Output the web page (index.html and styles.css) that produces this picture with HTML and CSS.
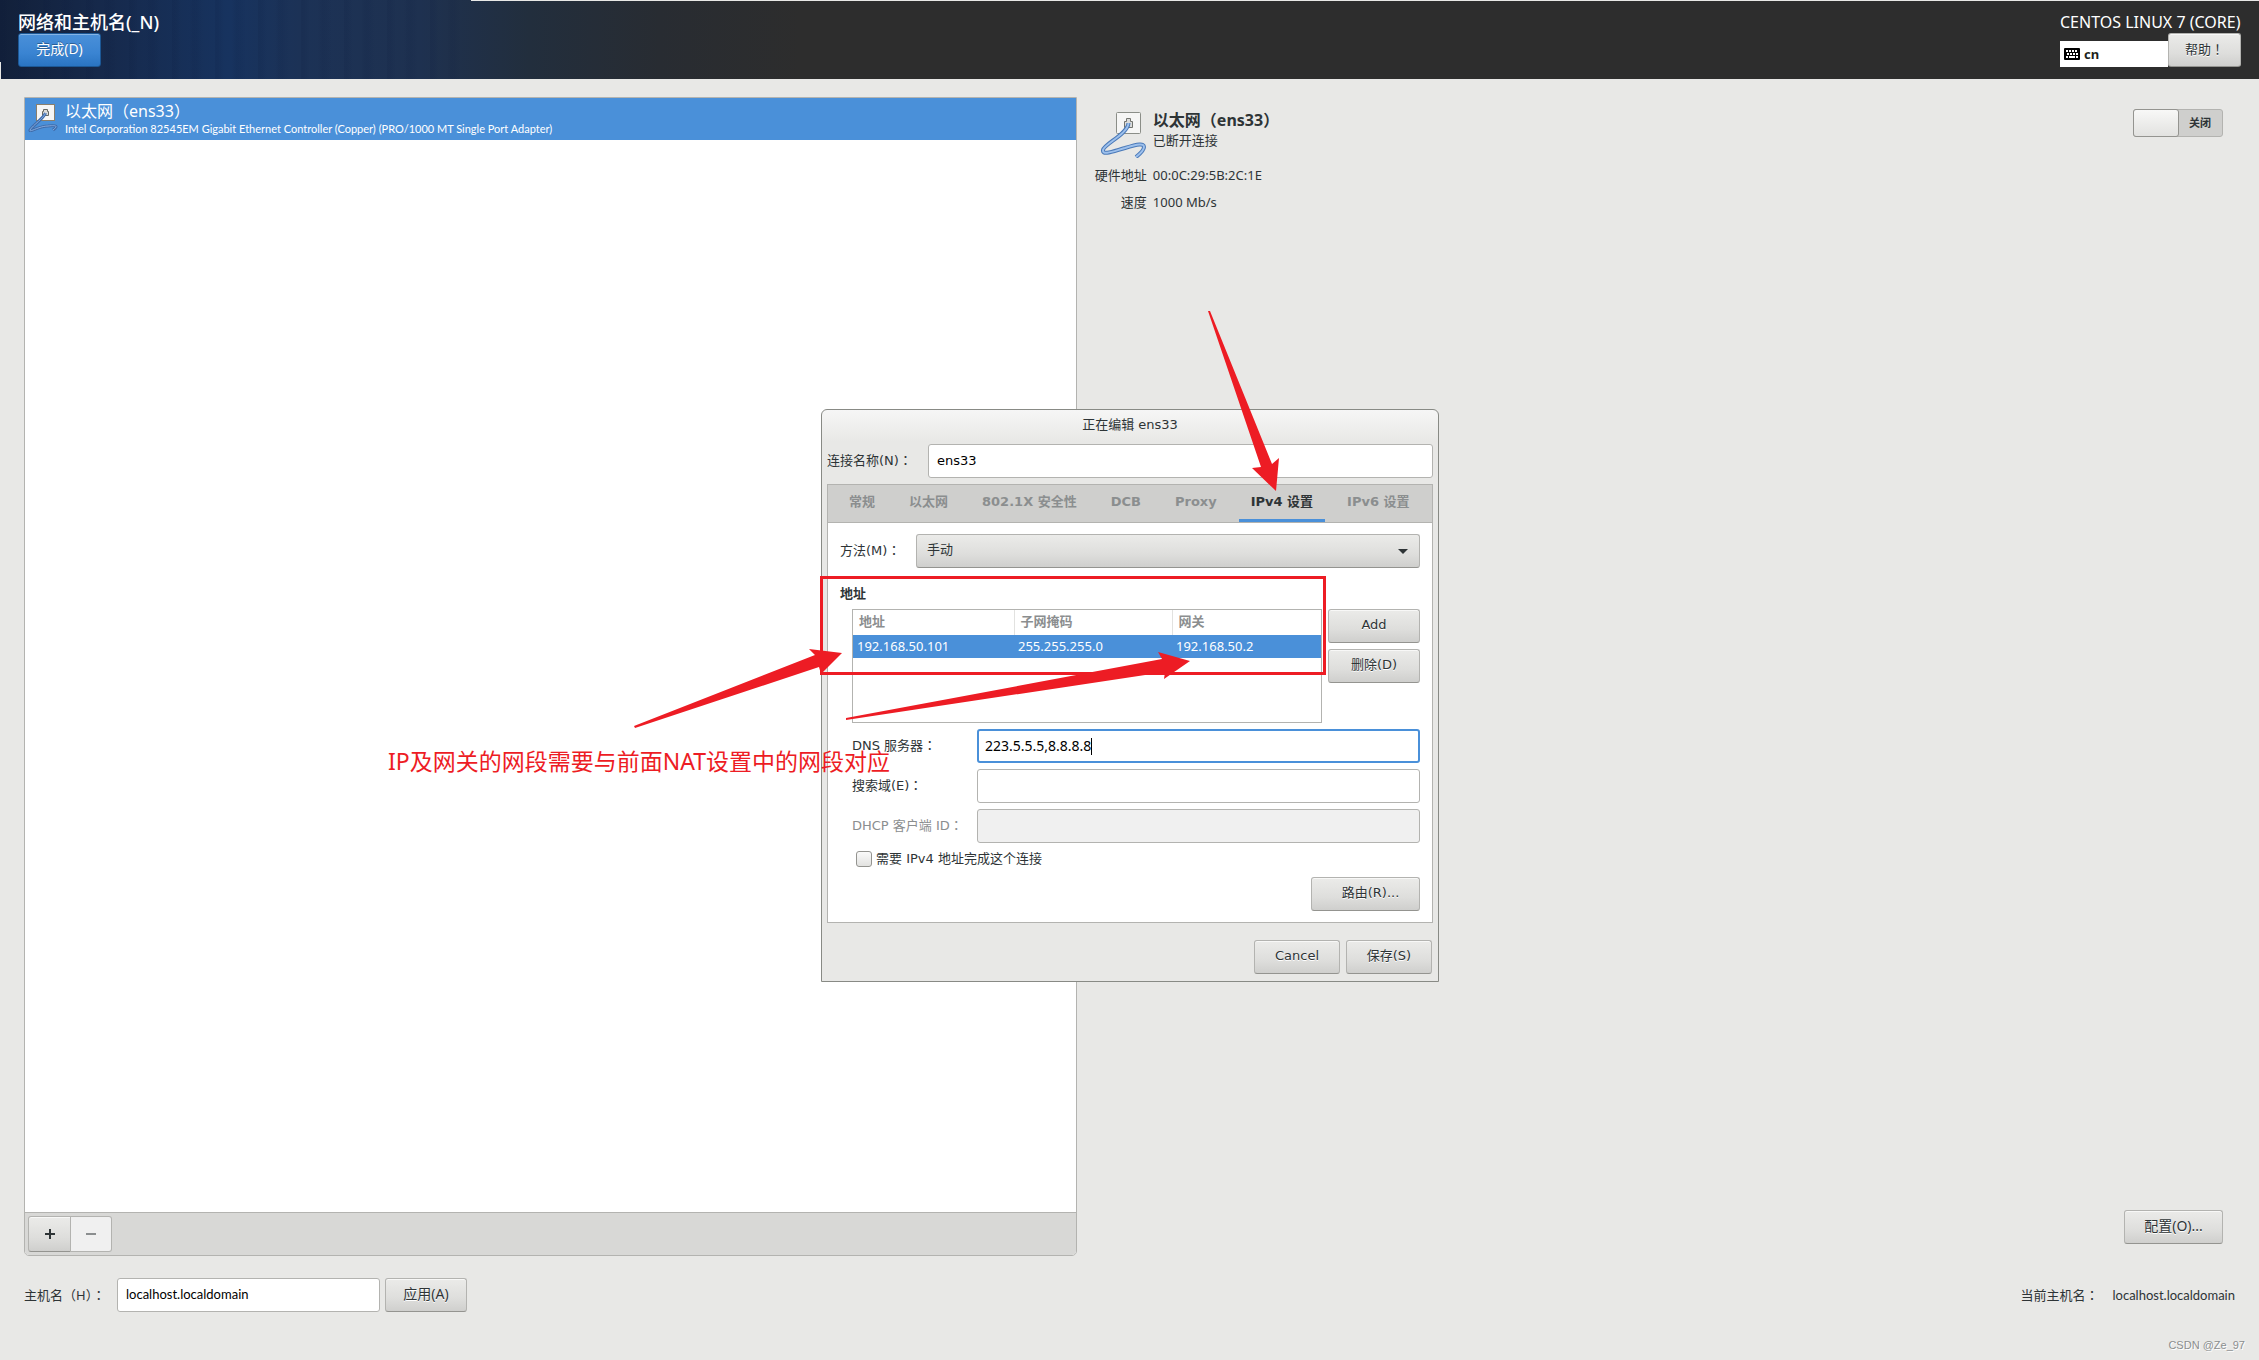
FILE: index.html
```html
<!DOCTYPE html>
<html lang="zh-CN">
<head>
  <meta charset="UTF-8">
  <meta name="viewport" content="width=device-width, initial-scale=1.0">
  <title>网络和主机名</title>
  <link rel="stylesheet" href="styles.css">
</head>
<body>
  <header>
    <div class="head-left">
      <h1>网络和主机名(_N)</h1>
      <button class="btn btn-blue">完成(D)</button>
    </div>
    <div class="head-right">
      <div class="product">CENTOS LINUX 7 (CORE)</div>
      <div class="head-tools">
        <div class="keyboard">
          <svg width="16" height="12" viewBox="0 0 16 12">
            <rect width="16" height="12" rx="1" fill="#000"/>
            <path d="M2 3H14M3 6H14" stroke="#fff" stroke-width="2" stroke-dasharray="2 1"/>
            <path d="M2 9H4M5 9H11M12 9H14" stroke="#fff" stroke-width="2"/>
          </svg>
          <span>cn</span>
        </div>
        <button class="btn btn-help">帮助<span class="mark" lang="zh-TW">！</span></button>
      </div>
    </div>
  </header>

  <main>
    <div class="columns">
      <section class="devices">
        <div class="device selected">
          <svg class="icon-small" viewBox="0 0 30 28">
            <rect x="8.500" y="0.500" width="18" height="16" fill="#f6f6f5" stroke="#8b7f6b"/>
            <path d="M14.500 11.500V7.500H15.500V5.500H19.500V7.500H20.500V11.500Z" fill="#dcdcda" stroke="#666862"/>
            <path d="M17.500 9C16 14 5 21 2 26C1 29 11 22 20 22C29 21 30 22 25 26" fill="none" stroke="#3f6cab" stroke-width="3"/>
            <path d="M17.500 9C16 14 5 21 2 26C1 29 11 22 20 22C29 21 30 22 25 26" fill="none" stroke="#83aade"/>
          </svg>
          <div>
            <div class="device-name">以太网（ens33）</div>
            <div class="device-desc">Intel Corporation 82545EM Gigabit Ethernet Controller (Copper) (PRO/1000 MT Single Port Adapter)</div>
          </div>
        </div>
        <div class="toolbar">
          <button class="btn tool" aria-label="添加"><svg width="10" height="10"><path d="M5 0V10M0 5H10" stroke="#2e3436" stroke-width="2"/></svg></button>
          <button class="btn tool" aria-label="移除" disabled><svg width="10" height="10"><path d="M0 5H10" stroke="#8b8e8f" stroke-width="2"/></svg></button>
        </div>
      </section>

      <section class="details">
        <div class="details-head">
          <svg class="icon-big" viewBox="0 0 47 46">
            <rect x="16.500" y="0.500" width="24" height="21" rx="1" fill="#f6f6f5" stroke="#8b8e88"/>
            <path d="M24.500 15.500V9.500H26.500V6.500H30.500V9.500H32.500V15.500Z" fill="#dcdcda" stroke="#72746f"/>
            <path d="M28.500 11C28 22 4 32 3 38C2 44 14 39 25 36C38 32 44 31 44 35C44 38 41 41 36 45" fill="none" stroke="#4a79b8" stroke-width="4"/>
            <path d="M28.500 11C28 22 4 32 3 38C2 44 14 39 25 36C38 32 44 31 44 35C44 38 41 41 36 45" fill="none" stroke="#9dc0ec" stroke-width="2"/>
          </svg>
          <div>
            <h2>以太网（ens33）</h2>
            <p>已断开连接</p>
          </div>
          <label class="switch"><input type="checkbox" aria-label="以太网"><span class="knob"></span><span class="state">关闭</span></label>
        </div>
        <dl>
          <dt>硬件地址</dt><dd>00:0C:29:5B:2C:1E</dd>
          <dt>速度</dt><dd>1000 Mb/s</dd>
        </dl>
        <button class="btn btn-config">配置(O)...</button>
      </section>
    </div>

    <div class="hostname">
      <label for="host">主机名（H）<span class="mark" lang="zh-TW">：</span></label>
      <input type="text" id="host" value="localhost.localdomain">
      <button class="btn btn-apply">应用(A)</button>
      <span class="current">当前主机名<span class="mark" lang="zh-TW">：</span></span>
      <span class="current-name">localhost.localdomain</span>
    </div>
  </main>

  <div class="dialog-layer">
    <div class="dialog" role="dialog" aria-labelledby="dialog-title">
      <div class="dialog-title" id="dialog-title">正在编辑 ens33</div>
      <div class="name-row">
        <label for="conn">连接名称(N)<span class="mark" lang="zh-TW">：</span></label>
        <input type="text" id="conn" value="ens33">
      </div>

      <div class="notebook">
        <nav class="tabs">
          <button>常规</button>
          <button>以太网</button>
          <button>802.1X 安全性</button>
          <button>DCB</button>
          <button>Proxy</button>
          <button class="active">IPv4 设置</button>
          <button>IPv6 设置</button>
        </nav>

        <div class="page">
          <div class="method-row">
            <label for="method">方法(M)<span class="mark" lang="zh-TW">：</span></label>
            <select id="method"><option>手动</option></select>
          </div>

          <h3>地址</h3>
          <div class="addresses">
            <div class="table-box">
              <table>
                <thead><tr><th>地址</th><th>子网掩码</th><th>网关</th></tr></thead>
                <tbody><tr><td>192.168.50.101</td><td>255.255.255.0</td><td>192.168.50.2</td></tr></tbody>
              </table>
            </div>
            <div class="address-buttons">
              <button class="btn">Add</button>
              <button class="btn">删除(D)</button>
            </div>
          </div>

          <div class="fields">
            <label for="dns">DNS 服务器<span class="mark" lang="zh-TW">：</span></label>
            <div class="focus-box"><input type="text" id="dns" value="223.5.5.5,8.8.8.8"><span class="caret"></span></div>
            <label for="search">搜索域(E)<span class="mark" lang="zh-TW">：</span></label>
            <input type="text" id="search">
            <label for="dhcp" class="dim">DHCP 客户端 ID<span class="mark" lang="zh-TW">：</span></label>
            <input type="text" id="dhcp" disabled>
          </div>

          <label class="check"><input type="checkbox">需要 IPv4 地址完成这个连接</label>
          <button class="btn btn-routes">路由(R)...</button>
        </div>
      </div>

      <div class="dialog-actions">
        <button class="btn">Cancel</button>
        <button class="btn">保存(S)</button>
      </div>

      <!-- notes drawn over the dialog -->
      <svg class="marks" width="1060" height="700" viewBox="380 300 1060 700">
        <rect x="821.500" y="577.500" width="503" height="96" fill="none" stroke="#ed1c24" stroke-width="3"/>
        <path fill="#ed1c24" d="M634 726L815 655L809 649L842 653L821 674L819 667L635 728Z"/>
        <path fill="#ed1c24" d="M846 718L1162 659L1158 652L1190 661L1164 679L1165 672L846 720Z"/>
        <path fill="#ed1c24" d="M1208 311L1261 467L1252 468L1276 491L1279 458L1272 464L1210 311Z"/>
      </svg>
      <div class="note">IP及网关的网段需要与前面NAT设置中的网段对应</div>
    </div>
  </div>

  <div class="watermark">CSDN @Ze_97</div>
</body>
</html>
```
FILE: styles.css
```css
* { box-sizing: border-box; margin: 0; padding: 0; }
body {
  position: relative;
  min-height: 100vh;
  display: flex;
  flex-direction: column;
  background: #e8e8e6;
  color: #2e3436;
  font-family: "Noto Sans", "Noto Sans CJK SC", sans-serif;
  font-size: 13px;
  line-height: 18px;
}
button, input, select { font: inherit; color: inherit; }
/* full-width punctuation centred in its box */
.mark { font-family: "Noto Sans CJK TC", sans-serif; line-height: 1; }

.btn {
  height: 34px;
  padding-bottom: 2px;
  border: 1px solid #b3b3b0;
  border-bottom-color: #949490;
  border-radius: 3px;
  background: linear-gradient(to bottom, #ebebe9, #dededc 60%, #cfcfcd);
  box-shadow: inset 0 1px #f8f8f7;
  color: #2e3436;
  text-shadow: 0 1px #fff;
}
input[type="text"] {
  height: 34px;
  min-width: 0;
  padding: 0 8px 2px;
  border: 1px solid #b3b3b0;
  border-radius: 3px;
  background: #fff;
  color: #000;
  outline: none;
}
input[type="text"]:disabled { background: #f0f0f0; }

header {
  position: relative;
  height: 79px;
  display: flex;
  justify-content: space-between;
  padding: 13px 18px 0;
  color: #fff;
  background:
    repeating-linear-gradient(to right, rgba(10, 25, 60, 0.12) 0 3px, transparent 9px 17px, rgba(10, 25, 60, 0.1) 21px 24px, transparent 31px 43px) left / 460px 100% no-repeat,
    linear-gradient(to right, #12203a 0, #16294b 100px, #17335f 230px, #1c3256 300px, #1e3150 420px, #222e3d 530px, #282c32 660px, #2d2d2d 800px);
}
header::before {
  content: "";
  position: absolute;
  top: 0;
  left: 471px;
  right: 0;
  height: 1px;
  background: #e8e8e6;
}
header::after {
  content: "";
  position: absolute;
  bottom: 0;
  left: 0;
  width: 1px;
  height: 17px;
  background: #e8e8e6;
}
h1 {
  height: 20px;
  font-size: 18px;
  line-height: 18px;
  font-weight: 500;
}
header .btn, .btn-apply, .btn-config { font-size: 14px; }
.head-left .btn-blue {
  width: 83px;
  border-color: #1c5896;
  background: linear-gradient(to bottom, #4a90d9, #3a84d2 60%, #2a74c2);
  box-shadow: inset 0 1px #84b4e6;
  text-shadow: 0 -1px #2b5f97;
  color: #fff;
}
.product { height: 20px; font-size: 16px; line-height: 18px; }
.head-tools { display: flex; align-items: flex-end; }
.keyboard {
  width: 108px;
  height: 26px;
  display: flex;
  align-items: center;
  gap: 4px;
  padding-left: 4px;
  background: #fff;
  color: #1c1f20;
  font-weight: 700;
}
.head-tools .btn-help { width: 73px; font-size: 13px; }

main {
  flex: 1;
  display: flex;
  flex-direction: column;
  gap: 22px;
  padding: 18px 24px 48px;
}
.columns {
  flex: 1;
  display: grid;
  grid-template-columns: 1fr 1.1fr;
}
.devices {
  display: flex;
  flex-direction: column;
  border: 1px solid #b3b3b0;
  border-radius: 0 0 5px 5px;
  background: #fff;
  overflow: hidden;
}
.device {
  height: 42px;
  display: flex;
  gap: 7px;
  padding: 4px 3px 0;
}
.selected { background: #4a90d9; color: #fff; }
.icon-small { width: 30px; height: 28px; margin-top: 2px; }
.device-name { font-size: 16px; line-height: 19px; }
.device-desc { font-family: Lato, sans-serif; font-size: 11px; line-height: 16px; }
.toolbar {
  height: 43px;
  display: flex;
  margin-top: auto;
  padding: 3px;
  border-top: 1px solid #b3b3b0;
  background: #d8d8d6;
}
.tool { width: 43px; height: 36px; padding: 0; border-radius: 3px 0 0 3px; }
.tool:disabled {
  width: 41px;
  border-left: 0;
  border-radius: 0 3px 3px 0;
  border-color: #b3b3b0;
  background: #f0f0f0;
  box-shadow: none;
}

.details {
  display: flex;
  flex-direction: column;
  padding: 12px 12px 12px 18px;
}
.details-head { display: flex; align-items: flex-start; gap: 6px; padding-left: 5px; }
.icon-big { width: 47px; height: 46px; margin-top: 3px; }
h2 { font-size: 16px; line-height: 22px; }
.switch {
  width: 90px;
  height: 28px;
  display: flex;
  margin-left: auto;
  border: 1px solid #b3b3b0;
  border-radius: 3px;
  background: #cfcfcd;
}
.switch input { position: absolute; opacity: 0; }
.knob {
  width: 46px;
  height: 28px;
  margin: -1px;
  border: 1px solid #949490;
  border-radius: 3px;
  background: linear-gradient(to bottom, #f8f8f7, #e2e2e0);
}
.state { flex: 1; font-size: 11px; font-weight: 700; line-height: 26px; text-align: center; }
dl {
  display: grid;
  grid-template-columns: 52px 1fr;
  gap: 9px 6px;
  padding-top: 8px;
}
dt { text-align: right; }
.btn-config { width: 99px; margin-top: auto; align-self: flex-end; }

.hostname { display: flex; align-items: center; gap: 5px; }
.hostname label { width: 88px; white-space: nowrap; }
.hostname input { width: 263px; font-family: Lato, sans-serif; }
.btn-apply { width: 82px; }
.current { margin-left: auto; }
.current-name { margin-left: 9px; font-family: Lato, sans-serif; }

.dialog-layer {
  position: absolute;
  inset: 0;
  display: flex;
  justify-content: center;
  align-items: flex-start;
  padding: 409px 0 0 1px;
}
.dialog {
  position: relative;
  width: 618px;
  border: 1px solid #888a85;
  border-radius: 6px 6px 0 0;
  background: linear-gradient(to bottom, #f6f6f6, #e8e8e6 32px);
  font-family: "DejaVu Sans", "Noto Sans CJK SC", sans-serif;
}
.dialog-title { height: 34px; line-height: 29px; text-align: center; }
.name-row { display: flex; align-items: center; padding: 0 5px 6px; }
.name-row label { width: 101px; }
.name-row input { flex: 1; }
.notebook { margin: 0 5px; border: 1px solid #b3b3b0; background: #fff; }
.tabs {
  height: 38px;
  display: flex;
  gap: 10px;
  padding-left: 9px;
  border-bottom: 1px solid #b3b3b0;
  background: #cfcfcd;
}
.tabs button {
  padding: 0 12px;
  border: 0;
  border-bottom: 3px solid transparent;
  background: none;
  color: #8b8e8f;
  font-weight: 700;
  white-space: nowrap;
}
.tabs .active { border-color: #4a90d9; color: #2e3436; }
.page { display: flex; flex-direction: column; padding: 11px 12px; }
.method-row { display: flex; align-items: center; }
.method-row label { width: 76px; }
select {
  flex: 1;
  height: 34px;
  padding: 0 10px 2px;
  border: 1px solid #b3b3b0;
  border-bottom-color: #949490;
  border-radius: 3px;
  appearance: none;
  background: url("data:image/svg+xml,%3Csvg xmlns='http://www.w3.org/2000/svg' width='10' height='5'%3E%3Cpath d='M0 0H10L5 5Z' fill='%232e3436'/%3E%3C/svg%3E") no-repeat right 11px center, linear-gradient(to bottom, #ebebe9, #dededc 60%, #cfcfcd);
}
h3 { margin: 17px 0 6px; font-size: 13px; line-height: 18px; }
.addresses { display: flex; gap: 6px; padding-left: 12px; }
.table-box { flex: 1; height: 114px; border: 1px solid #b3b3b0; }
table { width: 100%; border-collapse: collapse; table-layout: fixed; }
th {
  height: 25px;
  padding: 0 0 2px 6px;
  border-right: 1px solid #e2e2e0;
  color: #8b8e8f;
  text-align: left;
}
th:nth-child(1) { width: 161px; }
th:nth-child(2) { width: 158px; }
th:last-child { border: 0; }
td {
  height: 23px;
  padding: 0 0 2px 4px;
  background: #4a90d9;
  color: #fff;
  font-family: "Noto Sans", sans-serif;
}
.address-buttons { width: 92px; display: flex; flex-direction: column; gap: 6px; }
.fields {
  display: grid;
  grid-template-columns: 119px 1fr;
  align-items: center;
  gap: 6px;
  padding: 6px 0 0 12px;
}
.dim { color: #8b8e8f; white-space: nowrap; }
.focus-box { display: grid; align-items: center; }
.focus-box input[type="text"] {
  grid-area: 1 / 1;
  padding: 0 6px 2px;
  border: 2px solid #4a90d9;
  font-family: "Noto Sans", sans-serif;
  font-size: 14px;
}
.caret { grid-area: 1 / 1; width: 1px; height: 17px; margin-left: 114px; background: #000; }
.check { display: flex; align-items: center; gap: 4px; padding: 7px 0 9px 16px; }
.check input {
  width: 16px;
  height: 16px;
  appearance: none;
  border: 1px solid #949490;
  border-radius: 3px;
  background: linear-gradient(to bottom, #fafafa, #e2e2e0);
}
.btn-routes { width: 109px; padding-left: 10px; align-self: flex-end; }
.dialog-actions { display: flex; justify-content: flex-end; gap: 6px; padding: 17px 6px 7px; }
.dialog-actions .btn { width: 86px; }

.marks { position: absolute; left: -442px; top: -110px; pointer-events: none; }
.note {
  position: absolute;
  left: -434px;
  top: 335px;
  color: #ed1c24;
  font-family: "Noto Sans", "Noto Sans CJK SC", sans-serif;
  font-size: 23px;
  line-height: 32px;
  white-space: nowrap;
  pointer-events: none;
}
.watermark {
  position: absolute;
  right: 14px;
  bottom: 6px;
  color: #8b8e8f;
  font-family: "Liberation Sans", sans-serif;
  font-size: 11px;
  text-shadow: 1px 1px #fff;
}
```
